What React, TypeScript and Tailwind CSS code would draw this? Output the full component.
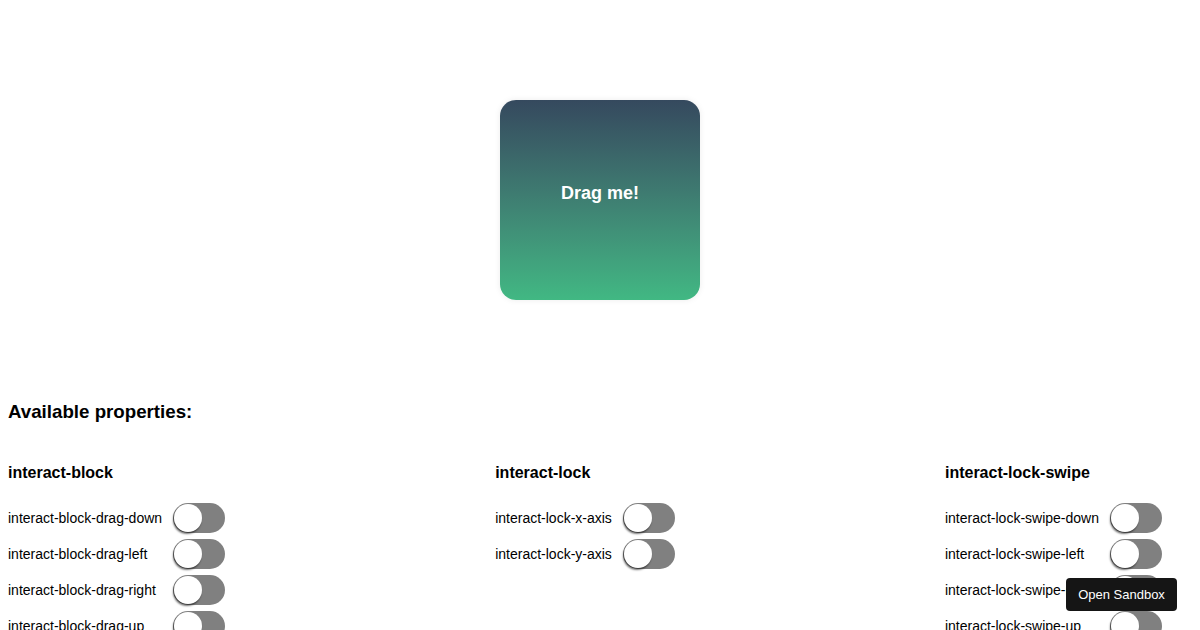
import React from "react";

const groups = [
  {
    title: "interact-block",
    items: [
      "interact-block-drag-down",
      "interact-block-drag-left",
      "interact-block-drag-right",
      "interact-block-drag-up",
    ],
  },
  {
    title: "interact-lock",
    items: ["interact-lock-x-axis", "interact-lock-y-axis"],
  },
  {
    title: "interact-lock-swipe",
    items: [
      "interact-lock-swipe-down",
      "interact-lock-swipe-left",
      "interact-lock-swipe-right",
      "interact-lock-swipe-up",
    ],
  },
];

function Toggle() {
  return (
    <div className="relative h-[30px] w-[52px] shrink-0 rounded-full bg-[#808080]">
      <div className="absolute left-[1px] top-[1px] h-[28px] w-[28px] rounded-full bg-white shadow-[-1px_2px_2px_rgba(0,0,0,0.55)]" />
    </div>
  );
}

export default function App() {
  return (
    <div className="relative h-[630px] w-[1200px] overflow-hidden bg-white font-['Liberation_Sans',Arial,sans-serif] text-black">
      <div className="flex h-[400px] items-center justify-center">
        <div className="flex h-[200px] w-[200px] items-center justify-center rounded-[16px] bg-gradient-to-b from-[#35495e] to-[#41b883] pb-[14px] shadow-[0_0_6px_rgba(0,0,0,0.08)]">
          <span className="text-[18px] font-bold text-white">Drag me!</span>
        </div>
      </div>

      <div className="pl-2 pr-[38px] pt-[1px]">
        <h3 className="text-[18.72px] font-bold leading-[22px]">Available properties:</h3>
        <div className="mt-[41px] flex justify-between">
          {groups.map((g) => (
            <div key={g.title}>
              <h4 className="text-[16px] font-bold leading-[18px]">{g.title}</h4>
              <div className="mt-[21px] grid grid-cols-[auto_auto] items-center gap-x-[11px] gap-y-[6px]">
                {g.items.map((item) => (
                  <React.Fragment key={item}>
                    <span className="text-[14px] leading-[16px]">{item}</span>
                    <Toggle />
                  </React.Fragment>
                ))}
              </div>
            </div>
          ))}
        </div>
      </div>

      <div className="absolute left-[1066px] top-[578px] flex h-[33px] w-[111px] items-center justify-center rounded-[4px] bg-[#151515] text-[13px] text-white">
        Open Sandbox
      </div>
    </div>
  );
}
